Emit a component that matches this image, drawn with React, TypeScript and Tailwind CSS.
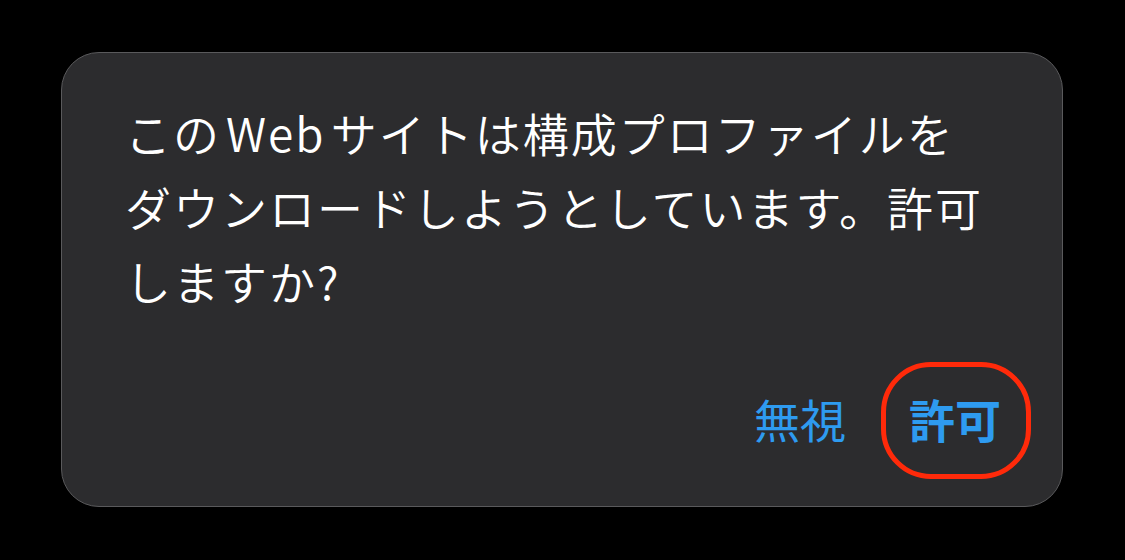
import React from "react";

export default function App() {
  return (
    <div
      className="w-[1125px] h-[560px] bg-black pt-[52px] pl-[61px]"
      style={{ fontFamily: '"Noto Sans CJK JP", "Noto Sans", sans-serif' }}
    >
      <div className="w-[1002px] h-[455px] rounded-[38px] bg-[#2c2c2e] border border-[#5a5a5c] flex flex-col">
        <p className="pl-[63px] pt-[42px] text-[46px] leading-[74px] tracking-[2px] font-[350] text-white">
          この<span className="mx-[5px]">Web</span>サイトは構成プロファイルを
          <br />
          ダウンロードしようとしています。許可
          <br />
          しますか?
        </p>
        <div className="flex-1 flex justify-end items-start pr-[61px] pt-[71px] gap-[63px]">
          <span className="text-[46px] leading-[60px] text-[#2e9bf0]">無視</span>
          <span className="relative text-[46px] leading-[60px] font-semibold text-[#2e9bf0]">
            許可
            <span className="absolute left-[-28px] top-[-26px] w-[150px] h-[117px] rounded-[50px] border-[5px] border-[#ff2a0a]"></span>
          </span>
        </div>
      </div>
    </div>
  );
}
